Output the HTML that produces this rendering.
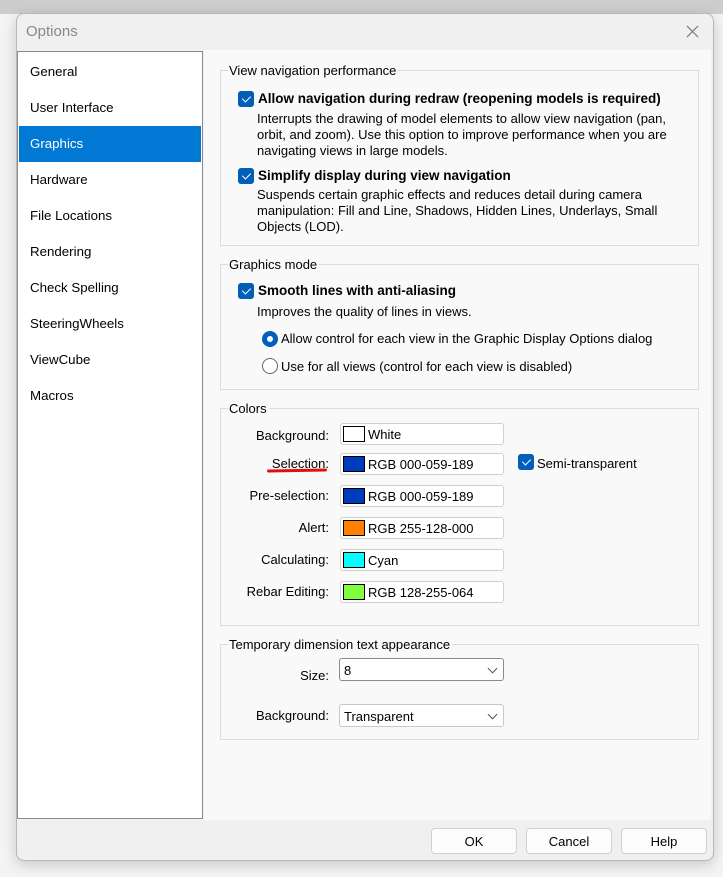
<!DOCTYPE html>
<html><head><style>
*{margin:0;padding:0;box-sizing:border-box}
body{width:723px;height:877px;position:relative;overflow:hidden;background:#f4f4f4;font-family:"Liberation Sans",sans-serif;font-size:13px;color:#000}
.a{position:absolute;white-space:nowrap}
.dlg{position:absolute;left:16px;top:13px;width:698px;height:848px;background:#f0f0f0;border:1px solid #b8b8b8;border-radius:8px;box-shadow:0 4px 14px rgba(0,0,0,.18)}
.list{position:absolute;left:17px;top:51px;width:186px;height:768px;background:#fff;border:1px solid #8a8a92}
.list div{position:absolute;left:1px;width:182px;height:36px;line-height:36px;padding-left:11px;font-size:13.3px}
.panel{position:absolute;left:204px;top:50px;width:507px;height:770px;background:#f9f9f9}
.gb{position:absolute;left:220px;width:479px;border:1px solid #dcdcdc}
.gt{position:absolute;left:228px;background:#f9f9f9;padding:0 2px 0 1px;font-size:13px}
.cb{position:absolute;width:16px;height:16px;background:#005fb8;border-radius:3px}
.cb:after{content:"";position:absolute;left:5.5px;top:3px;width:4px;height:7px;border:solid #fff;border-width:0 1px 1px 0;transform:rotate(45deg)}
.b{font-weight:bold;font-size:13.5px}
.sw{position:absolute;left:340px;width:164px;height:22px;background:#fff;border:1px solid #d0d0d0;border-radius:3px}
.sw i{position:absolute;left:2px;top:2px;width:22px;height:16px;border:1px solid #000}
.sw span{position:absolute;left:27px;top:3px}
.lbl{position:absolute;right:394px;text-align:right}
.dd{position:absolute;left:339px;width:165px;height:23px;background:#fff;border:1px solid #c8c8c8;border-radius:3px}
.dd span{position:absolute;left:4px;top:4px}
.dd:after{content:"";position:absolute;right:7px;top:6px;width:6px;height:6px;border:solid #555;border-width:0 1px 1px 0;transform:rotate(45deg)}
.btn{position:absolute;top:828px;width:86px;height:26px;background:#fdfdfd;border:1px solid #d0d0d0;border-radius:4px;text-align:center;line-height:25px;font-size:13px}
</style></head><body>
<div class="a" style="left:0;top:0;width:723px;height:14px;background:#cdcdcd"></div>
<div class="dlg"></div>
<div class="a" style="left:26px;top:23px;font-size:15px;color:#888">Options</div>
<svg class="a" style="left:686px;top:25px" width="13" height="13"><path d="M1 1L12 12M12 1L1 12" stroke="#777" stroke-width="1.2"/></svg>
<div class="list">
<div style="top:2px">General</div>
<div style="top:38px">User Interface</div>
<div style="top:74px;background:#0078d4;color:#fff">Graphics</div>
<div style="top:110px">Hardware</div>
<div style="top:146px">File Locations</div>
<div style="top:182px">Rendering</div>
<div style="top:218px">Check Spelling</div>
<div style="top:254px">SteeringWheels</div>
<div style="top:290px">ViewCube</div>
<div style="top:326px">Macros</div>
</div>
<div class="panel"></div>

<div class="gb" style="top:70px;height:176px"></div>
<div class="gt" style="top:63px">View navigation performance</div>
<div class="cb" style="left:238px;top:91px"></div>
<div class="a b" style="left:258px;top:91px">Allow navigation during redraw (reopening models is required)</div>
<div class="a" style="left:257px;top:111px;line-height:16px">Interrupts the drawing of model elements to allow view navigation (pan,<br>orbit, and zoom). Use this option to improve performance when you are<br>navigating views in large models.</div>
<div class="cb" style="left:238px;top:168px"></div>
<div class="a b" style="left:258px;top:168px">Simplify display during view navigation</div>
<div class="a" style="left:257px;top:187px;line-height:16px">Suspends certain graphic effects and reduces detail during camera<br>manipulation: Fill and Line, Shadows, Hidden Lines, Underlays, Small<br>Objects (LOD).</div>

<div class="gb" style="top:264px;height:126px"></div>
<div class="gt" style="top:257px">Graphics mode</div>
<div class="cb" style="left:238px;top:283px"></div>
<div class="a b" style="left:258px;top:283px">Smooth lines with anti-aliasing</div>
<div class="a" style="left:257px;top:304px">Improves the quality of lines in views.</div>
<div class="a" style="left:262px;top:331px;width:16px;height:16px;border-radius:50%;background:#005fb8"><div style="position:absolute;left:5px;top:5px;width:6px;height:6px;border-radius:50%;background:#fff"></div></div>
<div class="a" style="left:281px;top:331px">Allow control for each view in the Graphic Display Options dialog</div>
<div class="a" style="left:262px;top:358px;width:16px;height:16px;border-radius:50%;border:1px solid #666;background:#fff"></div>
<div class="a" style="left:281px;top:359px">Use for all views (control for each view is disabled)</div>

<div class="gb" style="top:408px;height:218px"></div>
<div class="gt" style="top:401px">Colors</div>
<div class="lbl" style="top:428px">Background:</div>
<div class="sw" style="top:423px"><i style="background:#fff"></i><span>White</span></div>
<div class="lbl" style="top:456px">Selection:</div>
<div class="a" style="left:267px;top:469px;width:60px;height:3px;background:#e01010;border-radius:2px;transform:rotate(-1deg)"></div>
<div class="sw" style="top:453px"><i style="background:#003bbd"></i><span>RGB 000-059-189</span></div>
<div class="cb" style="left:518px;top:454px"></div>
<div class="a" style="left:537px;top:456px">Semi-transparent</div>
<div class="lbl" style="top:488px">Pre-selection:</div>
<div class="sw" style="top:485px"><i style="background:#003bbd"></i><span>RGB 000-059-189</span></div>
<div class="lbl" style="top:520px">Alert:</div>
<div class="sw" style="top:517px"><i style="background:#ff8000"></i><span>RGB 255-128-000</span></div>
<div class="lbl" style="top:552px">Calculating:</div>
<div class="sw" style="top:549px"><i style="background:#00ffff"></i><span>Cyan</span></div>
<div class="lbl" style="top:584px">Rebar Editing:</div>
<div class="sw" style="top:581px"><i style="background:#80ff40"></i><span>RGB 128-255-064</span></div>

<div class="gb" style="top:644px;height:96px"></div>
<div class="gt" style="top:637px">Temporary dimension text appearance</div>
<div class="lbl" style="top:668px">Size:</div>
<div class="dd" style="top:658px;border-color:#8a8a8a"><span>8</span></div>
<div class="lbl" style="top:708px">Background:</div>
<div class="dd" style="top:704px"><span>Transparent</span></div>

<div class="btn" style="left:431px">OK</div>
<div class="btn" style="left:526px">Cancel</div>
<div class="btn" style="left:621px">Help</div>
</body></html>
